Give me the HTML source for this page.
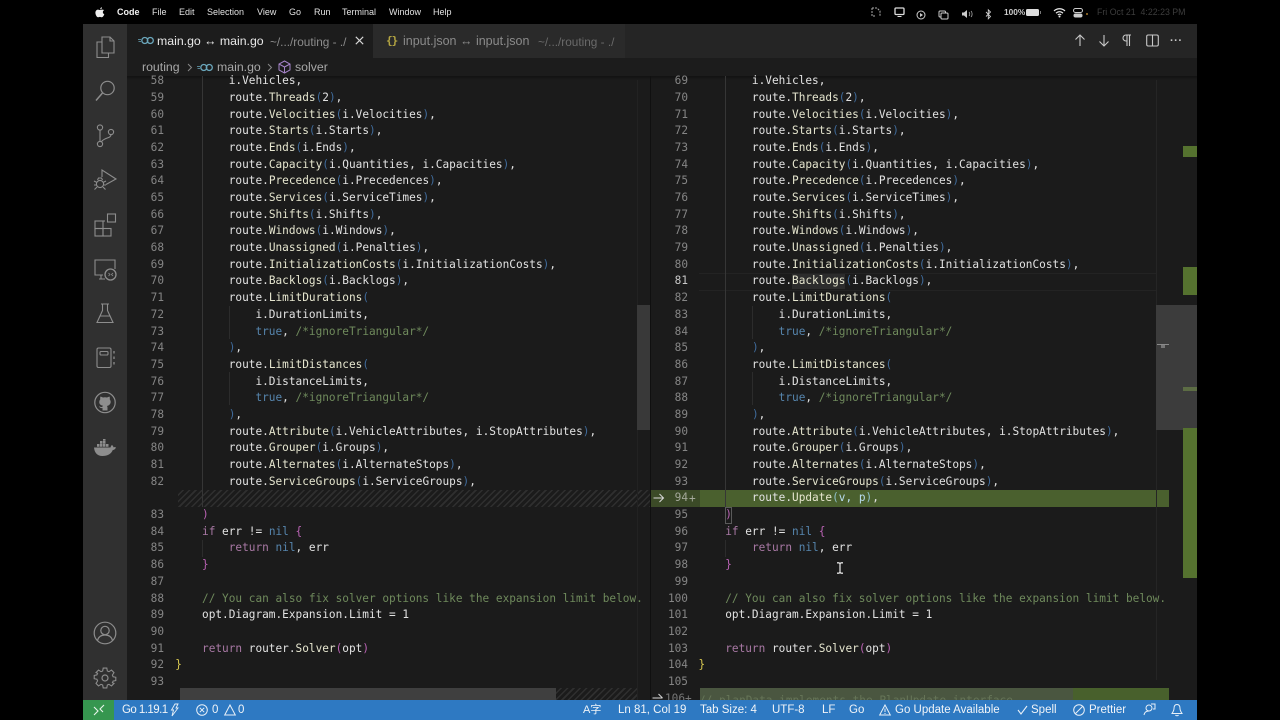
<!DOCTYPE html>
<html><head><meta charset="utf-8"><style>
html,body{margin:0;padding:0;background:#000;width:1280px;height:720px;overflow:hidden}
body{position:relative;font-family:"Liberation Sans",sans-serif;color:#ccc}
.a{position:absolute}
.t{position:absolute;white-space:pre}
.code{position:absolute;font:11.1px/16.7px "DejaVu Sans Mono","Liberation Mono",monospace;color:#e2e2e2;filter:blur(.3px)}
.code div{height:16.7px;white-space:pre}
.nums{position:absolute;font:11.1px/16.7px "DejaVu Sans Mono","Liberation Mono",monospace;color:#858585;text-align:right;width:40px;filter:blur(.3px)}
.nums div{height:16.7px}
i,u,s,em,b,q,tt{font:inherit;text-decoration:none;font-style:normal;font-weight:normal}
q{quotes:none}q:before,q:after{content:none}
i{color:#e6e6cf}u{color:#3f6a9a}s{color:#5685ad}em{color:#6f8a5c}b{color:#a878a4}q{color:#b862b2}tt{color:#d8c850}
.v{color:#b9dcef}
.p{color:#8fc0c8}
.m{position:absolute;top:6px;font-size:9px;line-height:12px;color:#e2e2e2;white-space:pre}
.st{position:absolute;top:700px;height:20px;line-height:21px;font-size:11.5px;color:#f0f4f8;white-space:pre}
svg{position:absolute;overflow:visible}
.ic{fill:none;stroke:#8d8d8d;stroke-width:1.1}
</style></head><body>

<!-- menu bar -->
<svg style="left:95px;top:7px" width="10" height="11" viewBox="0 0 10 11"><path fill="#eee" d="M7 .3C6 .4 5.100 1.300 5.200 2.400 6.200 2.400 7.100 1.400 7 .3ZM5 3C4.300 3 3.800 2.600 3.100 2.600 1.600 2.600.4 3.900.4 5.800c0 2 1.400 4.500 2.600 4.500.7 0 1-.4 1.900-.4s1.100.4 1.900.4c1 0 2.100-1.700 2.500-3-1.800-.8-2-3.300-.1-4.300C8.300 2.900 7.500 2.600 6.800 2.600 6 2.600 5.500 3 5 3Z"/></svg>
<div class="m" style="left:117px;font-weight:bold;color:#f2f2f2">Code</div>
<div class="m" style="left:152px">File</div>
<div class="m" style="left:179px">Edit</div>
<div class="m" style="left:207px">Selection</div>
<div class="m" style="left:257px">View</div>
<div class="m" style="left:289px">Go</div>
<div class="m" style="left:314px">Run</div>
<div class="m" style="left:342px">Terminal</div>
<div class="m" style="left:389px">Window</div>
<div class="m" style="left:433px">Help</div>

<svg style="left:870px;top:7px" width="12" height="11"><path fill="none" stroke="#aaa" stroke-dasharray="2 1" d="M2 1h5l3 3v5M2 1v8h4"/></svg>
<svg style="left:894px;top:7px" width="11" height="11"><rect x="1" y="1" width="9" height="6.500" rx="1" fill="none" stroke="#ddd" stroke-width="1.300"/><path d="M3.500 9.500h4" stroke="#ddd"/></svg>
<svg style="left:916px;top:10px" width="10" height="10" viewBox="0 0 10 10"><circle cx="5" cy="5" r="4" fill="none" stroke="#ccc"/><path d="M4 3l3 2-3 2z" fill="#ccc"/></svg>
<svg style="left:938px;top:10px" width="11" height="10"><rect x="1" y="1" width="6.500" height="6" rx="1" fill="none" stroke="#ccc"/><rect x="3" y="3" width="7" height="6" rx="1" fill="#000" stroke="#ccc"/></svg>
<svg style="left:961px;top:9px" width="12" height="10"><path d="M1 3.500h2l3-2.500v8L3 6.500H1z" fill="#ccc"/><path d="M8 3c1 1 1 3 0 4M10 2c1.500 1.500 1.500 4.500 0 6" fill="none" stroke="#aaa" stroke-width=".8"/></svg>
<svg style="left:985px;top:9px" width="7" height="11"><path d="M1 3l4.500 4.500L3.300 9.800V.8L5.500 3 1 7.500" fill="none" stroke="#ccc" stroke-width=".9"/></svg>
<div class="m" style="left:1004px;font-size:8.300px;font-weight:bold;color:#ccc">100%</div>
<div class="a" style="left:1026px;top:9px;width:13px;height:6.500px;background:#ddd;border-radius:1.500px"></div>
<div class="a" style="left:1040px;top:11px;width:1px;height:3px;background:#777"></div>
<svg style="left:1053px;top:7px" width="13" height="11"><path d="M1 4c3-3 8-3 11 0M3 6.200c2-2 5-2 7 0M4.800 8c1-1 2.400-1 3.400 0" fill="none" stroke="#eee" stroke-width="1.200"/><circle cx="6.500" cy="9.500" r="1" fill="#eee"/></svg>
<svg style="left:1073px;top:8px" width="11" height="11"><rect x=".5" y=".5" width="9" height="4" rx="2" fill="none" stroke="#ccc"/><rect x=".5" y="5.500" width="9" height="4" rx="2" fill="#ccc"/></svg>
<div class="a" style="left:1086px;top:13px;width:2px;height:2px;background:#a87a2c;border-radius:1px"></div>
<div class="m" style="left:1097px;font-size:8.800px;color:#3d3d3d">Fri Oct 21  4:22:23 PM</div>

<!-- window -->
<div class="a" style="left:83px;top:24px;width:1114px;height:676px;background:#1b1b1b"></div>
<div class="a" style="left:83px;top:24px;width:44px;height:676px;background:#303030"></div>
<div class="a" style="left:127px;top:24px;width:1070px;height:34px;background:#252525"></div>
<div class="a" style="left:127px;top:24px;width:246px;height:34px;background:#1c1c1c"></div>
<div class="a" style="left:373px;top:24px;width:252px;height:34px;background:#2a2a2a"></div>
<div class="a" style="left:127px;top:58px;width:1070px;height:18px;background:#1c1c1c"></div>
<div class="a" style="left:127px;top:76px;width:1070px;height:4px;background:linear-gradient(#121212,#1b1b1b)"></div>

<!-- tabs -->
<svg style="left:138px;top:36px" width="16" height="9" viewBox="0 0 16 9"><path d="M0 3.500h3M.5 5.500h2.500" stroke="#6aa6bb" stroke-width=".8"/><circle cx="6.800" cy="4.500" r="3" fill="none" stroke="#6aa6bb" stroke-width="1.300"/><circle cx="12.300" cy="4.500" r="3" fill="none" stroke="#6aa6bb" stroke-width="1.300"/></svg>
<div class="t" style="left:157px;top:34px;font-size:12.300px;line-height:15px;color:#e8e8e8">main.go ↔ main.go</div>
<div class="t" style="left:270px;top:35px;font-size:11.800px;line-height:14px;color:#8c8c8c">~/.../routing - ./</div>
<svg style="left:355px;top:36px" width="9" height="9"><path d="M.8.800l7.400 7.400M8.200.800L.8 8.200" stroke="#d8d8d8" stroke-width="1.100"/></svg>
<div class="t" style="left:386px;top:33px;font:bold 11px/15px 'DejaVu Sans Mono',monospace;color:#b5a642;letter-spacing:-1px">{}</div>
<div class="t" style="left:403px;top:34px;font-size:12.500px;line-height:15px;color:#8a8a8a">input.json ↔ input.json</div>
<div class="t" style="left:538px;top:35px;font-size:11.800px;line-height:14px;color:#6a6a6a">~/.../routing - ./</div>

<svg style="left:1074px;top:34px" width="12" height="13"><path d="M6 12V1M1.500 5.500L6 1l4.500 4.500" fill="none" stroke="#c8c8c8" stroke-width="1.100"/></svg>
<svg style="left:1098px;top:34px" width="12" height="13"><path d="M6 1v11M1.500 7.500L6 12l4.500-4.500" fill="none" stroke="#c8c8c8" stroke-width="1.100"/></svg>
<svg style="left:1122px;top:34px" width="10" height="13"><path d="M9 1H4a3 3 0 0 0 0 6h1V1M5 1v11M7.500 1v11" fill="none" stroke="#c8c8c8" stroke-width="1.100"/></svg>
<svg style="left:1146px;top:34px" width="13" height="13"><rect x=".7" y="1" width="11.600" height="11" rx="1.500" fill="none" stroke="#c8c8c8" stroke-width="1.100"/><path d="M6.500 1v11" stroke="#c8c8c8" stroke-width="1.100"/></svg>
<div class="t" style="left:1170px;top:35px;font-size:11px;line-height:12px;color:#c8c8c8;letter-spacing:.5px;font-weight:bold">···</div>

<!-- breadcrumb -->
<div class="t" style="left:142px;top:60px;font-size:12.300px;line-height:15px;color:#a8a8a8">routing</div>
<svg style="left:187px;top:63px" width="6" height="9"><path d="M1 1l3.500 3.500L1 8" fill="none" stroke="#888"/></svg>
<svg style="left:197px;top:63px" width="16" height="9" viewBox="0 0 16 9"><path d="M0 3.500h3M.5 5.500h2.500" stroke="#6aa6bb" stroke-width=".8"/><circle cx="6.800" cy="4.500" r="3" fill="none" stroke="#6aa6bb" stroke-width="1.300"/><circle cx="12.300" cy="4.500" r="3" fill="none" stroke="#6aa6bb" stroke-width="1.300"/></svg>
<div class="t" style="left:217px;top:60px;font-size:12.300px;line-height:15px;color:#a8a8a8">main.go</div>
<svg style="left:267px;top:63px" width="6" height="9"><path d="M1 1l3.500 3.500L1 8" fill="none" stroke="#888"/></svg>
<svg style="left:278px;top:60px" width="13" height="14"><path d="M6.500 1L12 4v6l-5.500 3L1 10V4zM1 4l5.500 3L12 4M6.500 7v6" fill="none" stroke="#a583c8" stroke-width="1"/></svg>
<div class="t" style="left:295px;top:60px;font-size:12.300px;line-height:15px;color:#a8a8a8">solver</div>

<!-- activity icons -->
<svg class="ic" style="left:95px;top:36px" width="21" height="24" viewBox="0 0 21 24"><path d="M7 1h8l4 4v12H7zM15 1v4h4M7 6H2v15.500h11.500V17"/></svg>
<svg class="ic" style="left:95px;top:80px" width="21" height="22" viewBox="0 0 21 22"><circle cx="12.500" cy="8" r="6.700" stroke-width="1.200"/><path d="M7.500 13L1 20.500" stroke-width="1.500"/></svg>
<svg class="ic" style="left:96px;top:124px" width="19" height="24" viewBox="0 0 19 24"><circle cx="4" cy="3.500" r="2.600"/><circle cx="4" cy="20" r="2.600"/><circle cx="15" cy="8" r="2.600"/><path d="M4 6v11.500M15 10.600c0 4-6 2.500-9.500 7"/></svg>
<svg class="ic" style="left:94px;top:169px" width="23" height="22" viewBox="0 0 23 22"><path d="M8 8V1l14 9-10 5.500"/><circle cx="6" cy="15" r="3.600"/><path d="M0 12l3 1.500M0 16h2.400M.5 20.500L3 18M12 12l-3 1.500M12 16H9.600M11.500 20.500L9 18M3.500 11l1-2h3l1 2"/></svg>
<svg class="ic" style="left:94px;top:213px" width="23" height="24" viewBox="0 0 23 24"><rect x="1" y="8" width="8" height="7.500"/><rect x="1" y="15.500" width="8" height="7.500"/><rect x="9" y="15.500" width="8" height="7.500"/><rect x="13.500" y="1" width="8" height="8"/><path d="M9 8h2"/></svg>
<svg class="ic" style="left:94px;top:259px" width="23" height="22" viewBox="0 0 23 22"><path d="M9 16H1V1h20v9M5 20h6M7 16v4"/><circle cx="16.500" cy="15.500" r="5.500" stroke-width="1.300"/><path d="M14.500 14l1.500 1.500-1.500 1.500M19 14l-1.500 1.500L19 17" stroke-width=".8"/></svg>
<svg class="ic" style="left:96px;top:303px" width="18" height="21" viewBox="0 0 18 21"><path d="M5 1h8M6.500 1v6.500L1 19.500h16L11.500 7.500V1M4 13h10"/></svg>
<svg class="ic" style="left:96px;top:347px" width="19" height="22" viewBox="0 0 19 22"><rect x="1" y="1" width="14" height="19.500" rx="1.500"/><rect x="4" y="4.500" width="8" height="3.500" rx="1"/><path d="M18 4v2.500M18 9.500V12M18 15v2.500" stroke-width="1.300"/></svg>
<svg style="left:94px;top:391px" width="22" height="23" viewBox="0 0 22 23"><circle cx="11" cy="11.500" r="10.200" fill="none" stroke="#8d8d8d" stroke-width="1.200"/><path fill="#8d8d8d" d="M6.500 5.500l2.500 1a7 7 0 0 1 4 0l2.500-1c.4 1 .4 2 .2 2.800 2 2.500 1 6-2.800 6.700.6.500.6 1.200.6 2v2.500h-5V17c-2 .5-3-.5-3.500-1.700 1 .5 2 1 3.400.6 0-.5.200-.8.600-1.100C4.700 14.200 4.500 10.500 6.300 8.300c-.2-.8-.2-1.800.2-2.800Z"/></svg>
<svg style="left:93px;top:439px" width="24" height="18" viewBox="0 0 24 18"><path fill="#8d8d8d" d="M1 8.500h16.500c.5-2 1.500-2.500 1.500-2.500s1.300 1 1.500 2.400c1-.4 2-.3 2.500.1-.8 1.800-2 2.400-3.200 2.500C18.200 15 14.500 17 9.500 17 4 17 1.500 13.500 1 8.500Z"/><path fill="#8d8d8d" d="M4 5h2.500v2.700H4zM7 5h2.500v2.700H7zM10 5h2.500v2.700H10zM7 2h2.500v2.700H7zM10 2h2.500v2.700H10zM13 5h2.500v2.700H13zM10 0h2.500v1.700H10z"/></svg>
<svg class="ic" style="left:93px;top:621px" width="24" height="24" viewBox="0 0 24 24"><circle cx="12" cy="12" r="10.800" stroke-width="1.200"/><circle cx="12" cy="9.500" r="4.200" stroke-width="1.200"/><path d="M4.500 19.500c1-4 4-5.500 7.500-5.500s6.500 1.500 7.500 5.500" stroke-width="1.200"/></svg>
<svg class="ic" style="left:93px;top:666px" width="24" height="24" viewBox="0 0 24 24"><circle cx="12" cy="12" r="3" stroke-width="1.200"/><path stroke-width="1.200" d="M10 1h4l.6 3.200 1.800.8L19.200 3.200 22 6l-1.800 2.800.8 1.800 3 .6v3.600l-3 .6-.8 1.800L22 18l-2.800 2.800-2.800-1.800-1.800.8-.6 3.200h-4l-.6-3.200-1.800-.8L4.800 20.800 2 18l1.800-2.800-.8-1.800-3-.6v-3.600l3-.6.8-1.800L2 6l2.800-2.800L7.600 5l1.800-.8z" transform="translate(1.200 1.200) scale(.9)"/></svg>

<!-- decorations behind code -->
<div class="a" style="left:178px;top:490px;width:472px;height:17px;background:repeating-linear-gradient(135deg,#1b1b1b 0,#1b1b1b 3px,#2f2f2f 3px,#2f2f2f 4.500px)"></div>
<div class="a" style="left:650px;top:490px;width:50px;height:17px;background:#3b4a27"></div>
<div class="a" style="left:700px;top:490px;width:469px;height:17px;background:#4a602e"></div>
<div class="a" style="left:699px;top:273px;width:457px;height:16px;border-top:1px solid #232323;border-bottom:1px solid #232323"></div>
<div class="a" style="left:792px;top:274px;width:53px;height:15px;background:#2c2c2c"></div>
<div class="a" style="left:725px;top:507px;width:5px;height:15px;border:1px solid #5a5a5a"></div>

<!-- indent guides -->
<div class="a" style="left:202px;top:76px;width:1px;height:431px;background:#363636"></div>
<div class="a" style="left:725px;top:76px;width:1px;height:431px;background:#363636"></div>
<div class="a" style="left:229px;top:306px;width:1px;height:33px;background:#2c2c2c"></div>
<div class="a" style="left:229px;top:372px;width:1px;height:33px;background:#2c2c2c"></div>
<div class="a" style="left:752px;top:306px;width:1px;height:33px;background:#2c2c2c"></div>
<div class="a" style="left:752px;top:372px;width:1px;height:33px;background:#2c2c2c"></div>
<div class="a" style="left:202px;top:540px;width:1px;height:17px;background:#2c2c2c"></div>
<div class="a" style="left:725px;top:540px;width:1px;height:17px;background:#2c2c2c"></div>
<div class="a" style="left:1156px;top:80px;width:1px;height:600px;background:#252525"></div>
<div class="a" style="left:650px;top:76px;width:1px;height:624px;background:#101010"></div>
<div class="a" style="left:637px;top:80px;width:1px;height:620px;background:#222"></div>

<!-- left numbers -->
<div class="nums" style="left:124px;top:73.200px"><div>58</div><div>59</div><div>60</div><div>61</div><div>62</div><div>63</div><div>64</div><div>65</div><div>66</div><div>67</div><div>68</div><div>69</div><div>70</div><div>71</div><div>72</div><div>73</div><div>74</div><div>75</div><div>76</div><div>77</div><div>78</div><div>79</div><div>80</div><div>81</div><div>82</div><div></div><div>83</div><div>84</div><div>85</div><div>86</div><div>87</div><div>88</div><div>89</div><div>90</div><div>91</div><div>92</div><div>93</div></div>

<!-- left code -->
<div class="code" style="left:175.300px;top:73.200px"><div>        i.Vehicles,</div>
<div>        route.<i>Threads</i><u>(</u>2<u>)</u>,</div>
<div>        route.<i>Velocities</i><u>(</u>i.Velocities<u>)</u>,</div>
<div>        route.<i>Starts</i><u>(</u>i.Starts<u>)</u>,</div>
<div>        route.<i>Ends</i><u>(</u>i.Ends<u>)</u>,</div>
<div>        route.<i>Capacity</i><u>(</u>i.Quantities, i.Capacities<u>)</u>,</div>
<div>        route.<i>Precedence</i><u>(</u>i.Precedences<u>)</u>,</div>
<div>        route.<i>Services</i><u>(</u>i.ServiceTimes<u>)</u>,</div>
<div>        route.<i>Shifts</i><u>(</u>i.Shifts<u>)</u>,</div>
<div>        route.<i>Windows</i><u>(</u>i.Windows<u>)</u>,</div>
<div>        route.<i>Unassigned</i><u>(</u>i.Penalties<u>)</u>,</div>
<div>        route.<i>InitializationCosts</i><u>(</u>i.InitializationCosts<u>)</u>,</div>
<div>        route.<i>Backlogs</i><u>(</u>i.Backlogs<u>)</u>,</div>
<div>        route.<i>LimitDurations</i><u>(</u></div>
<div>            i.DurationLimits,</div>
<div>            <s>true</s>, <em>/*ignoreTriangular*/</em></div>
<div>        <u>)</u>,</div>
<div>        route.<i>LimitDistances</i><u>(</u></div>
<div>            i.DistanceLimits,</div>
<div>            <s>true</s>, <em>/*ignoreTriangular*/</em></div>
<div>        <u>)</u>,</div>
<div>        route.<i>Attribute</i><u>(</u>i.VehicleAttributes, i.StopAttributes<u>)</u>,</div>
<div>        route.<i>Grouper</i><u>(</u>i.Groups<u>)</u>,</div>
<div>        route.<i>Alternates</i><u>(</u>i.AlternateStops<u>)</u>,</div>
<div>        route.<i>ServiceGroups</i><u>(</u>i.ServiceGroups<u>)</u>,</div>
<div></div>
<div>    <q>)</q></div>
<div>    <b>if</b> err != <s>nil</s> <q>{</q></div>
<div>        <b>return</b> <s>nil</s>, err</div>
<div>    <q>}</q></div>
<div></div>
<div>    <em>// You can also fix solver options like the expansion limit below.</em></div>
<div>    opt.Diagram.Expansion.Limit = 1</div>
<div></div>
<div>    <b>return</b> router.<i>Solver</i><q>(</q>opt<q>)</q></div>
<div><tt>}</tt></div>
<div></div></div>

<!-- right numbers -->
<div class="nums" style="left:648px;top:73.200px"><div>69</div><div>70</div><div>71</div><div>72</div><div>73</div><div>74</div><div>75</div><div>76</div><div>77</div><div>78</div><div>79</div><div>80</div><div style="color:#c8c8c8">81</div><div>82</div><div>83</div><div>84</div><div>85</div><div>86</div><div>87</div><div>88</div><div>89</div><div>90</div><div>91</div><div>92</div><div>93</div><div style="color:#a4a89a">94</div><div>95</div><div>96</div><div>97</div><div>98</div><div>99</div><div>100</div><div>101</div><div>102</div><div>103</div><div>104</div><div>105</div></div>
<div class="t" style="left:689px;top:491px;font:11.100px/16.700px 'DejaVu Sans Mono',monospace;color:#a4a89a">+</div>
<svg style="left:653px;top:493px" width="12" height="10"><path d="M.5 5h10M6.500 1l4 4-4 4" fill="none" stroke="#d8d8d8" stroke-width="1"/></svg>

<!-- right code -->
<div class="code" style="left:698.500px;top:73.200px"><div>        i.Vehicles,</div>
<div>        route.<i>Threads</i><u>(</u>2<u>)</u>,</div>
<div>        route.<i>Velocities</i><u>(</u>i.Velocities<u>)</u>,</div>
<div>        route.<i>Starts</i><u>(</u>i.Starts<u>)</u>,</div>
<div>        route.<i>Ends</i><u>(</u>i.Ends<u>)</u>,</div>
<div>        route.<i>Capacity</i><u>(</u>i.Quantities, i.Capacities<u>)</u>,</div>
<div>        route.<i>Precedence</i><u>(</u>i.Precedences<u>)</u>,</div>
<div>        route.<i>Services</i><u>(</u>i.ServiceTimes<u>)</u>,</div>
<div>        route.<i>Shifts</i><u>(</u>i.Shifts<u>)</u>,</div>
<div>        route.<i>Windows</i><u>(</u>i.Windows<u>)</u>,</div>
<div>        route.<i>Unassigned</i><u>(</u>i.Penalties<u>)</u>,</div>
<div>        route.<i>InitializationCosts</i><u>(</u>i.InitializationCosts<u>)</u>,</div>
<div>        route.<i>Backlogs</i><u>(</u>i.Backlogs<u>)</u>,</div>
<div>        route.<i>LimitDurations</i><u>(</u></div>
<div>            i.DurationLimits,</div>
<div>            <s>true</s>, <em>/*ignoreTriangular*/</em></div>
<div>        <u>)</u>,</div>
<div>        route.<i>LimitDistances</i><u>(</u></div>
<div>            i.DistanceLimits,</div>
<div>            <s>true</s>, <em>/*ignoreTriangular*/</em></div>
<div>        <u>)</u>,</div>
<div>        route.<i>Attribute</i><u>(</u>i.VehicleAttributes, i.StopAttributes<u>)</u>,</div>
<div>        route.<i>Grouper</i><u>(</u>i.Groups<u>)</u>,</div>
<div>        route.<i>Alternates</i><u>(</u>i.AlternateStops<u>)</u>,</div>
<div>        route.<i>ServiceGroups</i><u>(</u>i.ServiceGroups<u>)</u>,</div>
<div>        route.<i>Update</i><span class="p">(</span><span class="v">v, p</span><span class="p">)</span>,</div>
<div>    <q>)</q></div>
<div>    <b>if</b> err != <s>nil</s> <q>{</q></div>
<div>        <b>return</b> <s>nil</s>, err</div>
<div>    <q>}</q></div>
<div></div>
<div>    <em>// You can also fix solver options like the expansion limit below.</em></div>
<div>    opt.Diagram.Expansion.Limit = 1</div>
<div></div>
<div>    <b>return</b> router.<i>Solver</i><q>(</q>opt<q>)</q></div>
<div><tt>}</tt></div>
<div></div></div>

<!-- scrollbars / ruler -->
<div class="a" style="left:637px;top:305px;width:13px;height:125px;background:#393939"></div>
<div class="a" style="left:1156px;top:305px;width:41px;height:125px;background:#3c3c3c"></div>
<div class="a" style="left:1157px;top:344px;width:12px;height:1px;background:#8a8a8a"></div>
<div class="a" style="left:1161px;top:345px;width:4px;height:3px;background:#777"></div>
<div class="a" style="left:1183px;top:146px;width:14px;height:11px;background:#55722f"></div>
<div class="a" style="left:1183px;top:267px;width:14px;height:28px;background:#55722f"></div>
<div class="a" style="left:1183px;top:387px;width:14px;height:4px;background:#5c6c44"></div>
<div class="a" style="left:1183px;top:428px;width:14px;height:150px;background:#55722f"></div>

<!-- bottom horizontal bars -->
<div class="a" style="left:180px;top:688px;width:376px;height:12px;background:#3f3f3f"></div>
<div class="a" style="left:556px;top:688px;width:81px;height:12px;background:repeating-linear-gradient(135deg,#1b1b1b 0,#1b1b1b 3px,#2f2f2f 3px,#2f2f2f 4.500px)"></div>
<div class="a" style="left:700px;top:688px;width:373px;height:12px;background:#4a5640"></div>
<div class="a" style="left:1073px;top:688px;width:96px;height:12px;background:#48602c"></div>
<div class="t" style="left:665px;top:693px;font:11.100px/11px 'DejaVu Sans Mono',monospace;color:#777;height:7px;overflow:hidden">106+</div>
<div class="t" style="left:699px;top:695px;font:11.100px/11px 'DejaVu Sans Mono',monospace;color:#667558;height:5px;overflow:hidden">// planData implements the PlanUpdate interface.</div>
<svg style="left:652px;top:692px" width="12" height="8"><path d="M.5 6h10M6.500 2l4 4" fill="none" stroke="#d8d8d8"/></svg>

<!-- I-beam -->
<svg style="left:836px;top:562px" width="8" height="12"><path d="M1 .8h2l1 1 1-1h2M4 1.800v8.400M1 11.200h2l1-1 1 1h2" fill="none" stroke="#ddd" stroke-width="1.300"/></svg>

<!-- status -->
<div class="a" style="left:83px;top:700px;width:1114px;height:20px;background:#2e79c2"></div>
<div class="a" style="left:83px;top:700px;width:31px;height:20px;background:#36964f"></div>
<svg style="left:93px;top:704px" width="12" height="12"><path d="M1 11l4-4-4-4M11 1L7 5l3 3" fill="none" stroke="#e8f4ea" stroke-width="1.100"/></svg>
<div class="st" style="left:122px;letter-spacing:-.55px">Go 1.19.1</div>
<svg style="left:170px;top:703px" width="9" height="14"><path d="M5 1h3L6 5h2L2 13l1.500-6H1.500z" fill="none" stroke="#e8f0f8" stroke-width=".9"/></svg>
<svg style="left:196px;top:704px" width="12" height="12"><circle cx="6" cy="6" r="5.300" fill="none" stroke="#e8f0f8"/><path d="M3.800 3.800l4.400 4.400M8.200 3.800L3.800 8.200" stroke="#e8f0f8"/></svg>
<div class="st" style="left:212px">0</div>
<svg style="left:224px;top:704px" width="12" height="12"><path d="M6 1l5.300 10H.7z" fill="none" stroke="#e8f0f8"/></svg>
<div class="st" style="left:238px">0</div>
<div class="st" style="left:583px;font-family:'Liberation Sans','Noto Sans CJK SC',sans-serif;font-size:11px">A字</div>
<div class="st" style="left:618px">Ln 81, Col 19</div>
<div class="st" style="left:700px">Tab Size: 4</div>
<div class="st" style="left:772px">UTF-8</div>
<div class="st" style="left:822px">LF</div>
<div class="st" style="left:849px">Go</div>
<svg style="left:879px;top:704px" width="12" height="12"><path d="M6 1l5.300 10H.7zM6 4.500v3.500M6 9v1" fill="none" stroke="#e8f0f8"/></svg>
<div class="st" style="left:895px">Go Update Available</div>
<svg style="left:1017px;top:705px" width="11" height="10"><path d="M1 5l3 4 6-8" fill="none" stroke="#e8f0f8" stroke-width="1.100"/></svg>
<div class="st" style="left:1031px">Spell</div>
<svg style="left:1073px;top:704px" width="12" height="12"><circle cx="6" cy="6" r="5.300" fill="none" stroke="#e8f0f8"/><path d="M2.500 9.500l7-7" stroke="#e8f0f8"/></svg>
<div class="st" style="left:1089px">Prettier</div>
<svg style="left:1143px;top:703px" width="13" height="14"><circle cx="6" cy="5" r="3" fill="none" stroke="#e8f0f8"/><path d="M1 12c.5-3 2.500-4 5-4M8 1h4v5h-2" fill="none" stroke="#e8f0f8"/></svg>
<svg style="left:1171px;top:703px" width="12" height="14"><path d="M6 1.500C3.500 1.500 3 3.500 3 5.500c0 2-1 3.500-2 5h10c-1-1.500-2-3-2-5 0-2-.5-4-3-4ZM4.500 12c.5 1 2.500 1 3 0" fill="none" stroke="#e8f0f8"/></svg>
</body></html>
